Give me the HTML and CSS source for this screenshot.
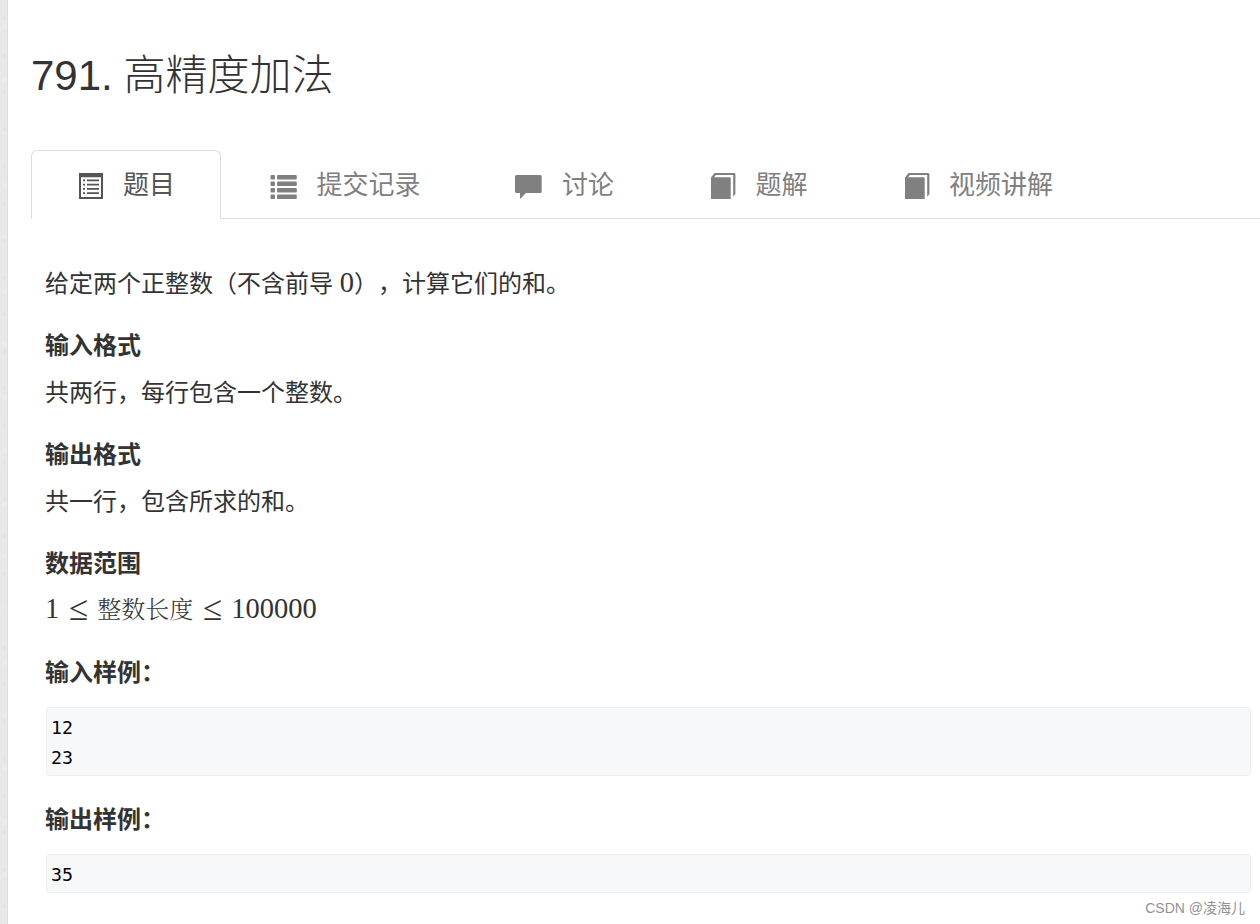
FILE: index.html
```html
<!DOCTYPE html>
<html lang="zh-CN">
<head>
    <meta charset="UTF-8">
    <meta name="viewport" content="width=device-width, initial-scale=1.0">
    <title>791. 高精度加法</title>
    <link rel="stylesheet" href="styles.css">
</head>
<body>
    <div class="page">
        <h1>791. <span>高精度加法</span></h1>

        <ul class="tabs">
            <li class="active">
                <svg class="icon" viewBox="0 0 30 26"><path fill-rule="evenodd" d="M3 0h24v26H3zM5 4.300v19.700h20V4.300z"/><path d="M7 6.500h2v1.800H7zm4 0h12v1.800H11zM7 10.700h2v1.800H7zm4 0h12v1.800H11zM7 15h2v1.800H7zm4 0h12v1.800H11zM7 19.300h2v1.800H7zm4 0h12v1.800H11z"/></svg>
                <a>题目</a>
            </li>
            <li>
                <svg class="icon" viewBox="0 0 30 26"><rect x="0.500" y="2" width="4.500" height="4.600" rx="1"/><rect x="7" y="2" width="19.800" height="4.600" rx="1"/><rect x="0.500" y="8.400" width="4.500" height="4.600" rx="1"/><rect x="7" y="8.400" width="19.800" height="4.600" rx="1"/><rect x="0.500" y="14.900" width="4.500" height="4.600" rx="1"/><rect x="7" y="14.900" width="19.800" height="4.600" rx="1"/><rect x="0.500" y="21.400" width="4.500" height="4.600" rx="1"/><rect x="7" y="21.400" width="19.800" height="4.600" rx="1"/></svg>
                <a>提交记录</a>
            </li>
            <li>
                <svg class="icon" viewBox="0 0 30 26"><path d="M1.500 2h23.700q1.500 0 1.500 1.500v15q0 1.500-1.500 1.500H11l-6 6v-6H1.500Q0 20 0 18.500v-15Q0 2 1.500 2z"/></svg>
                <a>讨论</a>
            </li>
            <li>
                <svg class="icon" viewBox="0 0 30 26"><path d="M2 26V4.500L5.500 0H25q1.400 0 1.400 1.400V21l-2.200 2.800V2H7L5 4.200h15.500q1.200 0 1.200 1.200V26z"/></svg>
                <a>题解</a>
            </li>
            <li>
                <svg class="icon" viewBox="0 0 30 26"><path d="M3 26V4.500L6.500 0H26q1.400 0 1.400 1.400V21l-2.200 2.800V2H8L6 4.200h15.500q1.200 0 1.200 1.200V26z"/></svg>
                <a>视频讲解</a>
            </li>
        </ul>

        <div class="content">
            <p>给定两个正整数（不含前导 <span class="math">0</span>），计算它们的和。</p>
            <h4>输入格式</h4>
            <p>共两行，每行包含一个整数。</p>
            <h4>输出格式</h4>
            <p>共一行，包含所求的和。</p>
            <h4>数据范围</h4>
            <p class="formula"><span class="math">1</span><span class="le">≤</span><span class="mtext">整数长度</span><span class="le">≤</span><span class="math">100000</span></p>
            <h4 class="sample">输入样例：</h4>
            <pre>12
23</pre>
            <h4 class="sample">输出样例：</h4>
            <pre>35</pre>
        </div>
    </div>
    <div class="watermark">CSDN @凌海儿</div>
</body>
</html>
```

FILE: styles.css
```css
body {
    margin: 0;
    height: 924px;
    overflow: hidden;
    position: relative;
    font-family: "Liberation Sans", "Noto Sans CJK SC", sans-serif;
    color: #333;
    background-color: #e8e8e8;
    background-image: radial-gradient(circle, #e2e2e2 0, transparent 3px), radial-gradient(circle, #eee 0, transparent 4px);
    background-size: 9px 37px, 11px 53px;
    text-spacing-trim: space-all;
}

.page {
    height: 924px;
    margin-left: 7px;
    border-left: 1px solid #ddd;
    padding-left: 23px;
    box-sizing: border-box;
    background: #fff;
}

h1 {
    margin: 0;
    padding-top: 42px;
    height: 108px;
    font-size: 42px;
    font-weight: 300;
    line-height: 60px;
}

h1 span {
    margin-left: -1px;
    font-family: "Noto Sans CJK SC", sans-serif;
}

/* tabs */
.tabs {
    list-style: none;
    margin: 0;
    padding: 0;
    display: flex;
    height: 68px;
    border-bottom: 1px solid #ddd;
}

.tabs li {
    display: flex;
    box-sizing: border-box;
    height: 69px;
    margin-right: 3.5px;
    padding: 0 45px 0 44px;
    border: 1px solid transparent;
    border-bottom: none;
    border-radius: 6px 6px 0 0;
    color: #808080;
    font-size: 26px;
    line-height: 68px;
}

.tabs li.active {
    color: #555;
    background: #fff;
    border-color: #ddd;
}

.icon {
    width: 30px;
    height: 26px;
    margin: 22px 17px 0 0;
    fill: currentColor;
}

/* problem text */
.content {
    padding: 47px 9px 0 14px;
    font-size: 24px;
}

.content p {
    margin: 0 0 14px;
    height: 36px;
    line-height: 36px;
    white-space: nowrap;
}

.content h4 {
    margin: 0 0 11px;
    height: 48px;
    box-sizing: border-box;
    padding-top: 12px;
    font-size: 24px;
    line-height: 36px;
}

.content .sample {
    margin-bottom: 16px;
}

.math {
    font-family: "Liberation Serif", serif;
    font-size: 28.5px;
    line-height: 30px;
}

.content .formula {
    display: flex;
    margin: -2px 0 16px;
}

.formula .math {
    line-height: 36px;
}

.le {
    width: 38px;
    text-align: center;
    font-family: "Liberation Serif", serif;
    font-size: 35px;
    line-height: 36px;
}

.mtext {
    font-family: "Noto Serif CJK SC", "Noto Sans CJK SC", serif;
    font-weight: 300;
    line-height: 34px;
}

pre {
    margin: 0 0 14px 1px;
    padding: 5px 4px 2px;
    border: 1px solid #eceeef;
    border-radius: 4px;
    background: #f6f8fa;
    color: #000;
    font-family: "DejaVu Sans Mono", monospace;
    font-size: 18.3px;
    line-height: 30px;
}

.watermark {
    position: absolute;
    right: 15px;
    bottom: 5px;
    font-size: 14px;
    line-height: 22px;
    color: #929292;
}
```
